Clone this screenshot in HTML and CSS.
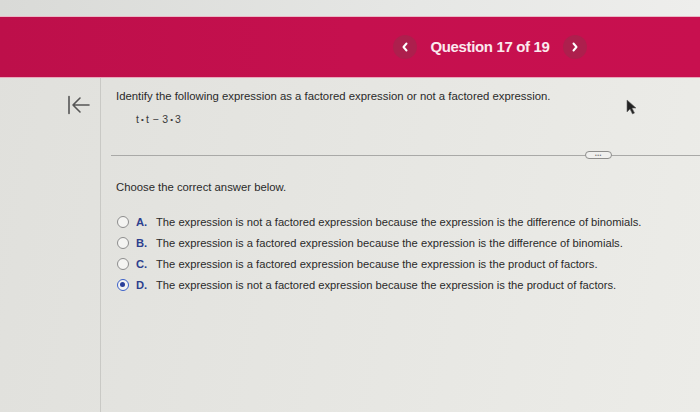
FILE: index.html
```html
<!DOCTYPE html>
<html>
<head>
<meta charset="utf-8">
<link rel="stylesheet" href="styles.css">
</head>
<body>
<div class="topstrip"></div>
<header class="banner">
  <nav class="qnav">
    <span class="navbtn"><svg width="8" height="10" viewBox="0 0 8 10"><path d="M5.5 1.5 L2.5 5 L5.5 8.5" fill="none" stroke="#fff" stroke-width="2" stroke-linecap="round" stroke-linejoin="round"/></svg></span>
    <span class="qtitle">Question 17 of 19</span>
    <span class="navbtn"><svg width="8" height="10" viewBox="0 0 8 10"><path d="M2.5 1.5 L5.5 5 L2.5 8.5" fill="none" stroke="#fff" stroke-width="2" stroke-linecap="round" stroke-linejoin="round"/></svg></span>
  </nav>
</header>
<main class="main">
  <aside class="sidebar">
    <svg class="collapse" width="24" height="20" viewBox="0 0 24 20"><path d="M2 1.5 V18.5 M22 10 H6 M13 3 L6 10 L13 17" fill="none" stroke="#555" stroke-width="1.6" stroke-linecap="round" stroke-linejoin="round"/></svg>
  </aside>
  <section class="content">
    <p class="prompt">Identify the following expression as a factored expression or not a factored expression.</p>
    <p class="expr">t<span class="dot">•</span>t<span class="minus">−</span>3<span class="dot">•</span>3</p>
    <div class="divider"><span class="pill">•••</span></div>
    <p class="choose">Choose the correct answer below.</p>
    <ul class="options">
      <li class="opt"><span class="radio"></span><span class="letter">A.</span><span class="otext">The expression is not a factored expression because the expression is the difference of binomials.</span></li>
      <li class="opt"><span class="radio"></span><span class="letter">B.</span><span class="otext">The expression is a factored expression because the expression is the difference of binomials.</span></li>
      <li class="opt"><span class="radio"></span><span class="letter">C.</span><span class="otext">The expression is a factored expression because the expression is the product of factors.</span></li>
      <li class="opt"><span class="radio checked"></span><span class="letter">D.</span><span class="otext">The expression is not a factored expression because the expression is the product of factors.</span></li>
    </ul>
  </section>
</main>
<svg class="cursor" width="12" height="16" viewBox="0 0 12 16"><path d="M1 1 L1 13 L4 10 L6.5 15 L8.5 14 L6 9 L10 9 Z" fill="#222" stroke="#666" stroke-width="0.6"/></svg>
</body>
</html>
```
FILE: styles.css
```css
html, body {
  margin: 0;
  padding: 0;
}
body {
  width: 700px;
  height: 412px;
  overflow: hidden;
  background: linear-gradient(100deg, #e0e0dc 0%, #e6e6e2 50%, #ecece8 100%);
  font-family: "Liberation Sans", Arial, sans-serif;
  color: #2a2a2a;
  position: relative;
}
.topstrip {
  height: 16px;
  background: linear-gradient(90deg, #d9dad7, #e6e7e5 60%, #eeeeec);
  border-bottom: 1px solid #e9b8c6;
}
.banner {
  height: 60px;
  background: linear-gradient(90deg, #bd0f4a 0%, #c5104e 50%, #c8104f 100%);
  display: flex;
  align-items: center;
  justify-content: center;
  padding-left: 280px;
  border-bottom: 1px solid #e8a9bb;
}
.qnav {
  display: flex;
  align-items: center;
  gap: 12px;
  margin-top: -1px;
}
.navbtn {
  width: 24px;
  height: 24px;
  border-radius: 50%;
  background: #ad1f4d;
  display: flex;
  align-items: center;
  justify-content: center;
}
.qtitle {
  color: #fbe9ee;
  font-weight: bold;
  font-size: 15px;
  letter-spacing: -0.35px;
  margin: 0 1px;
}
.main {
  display: flex;
  height: 335px;
}
.sidebar {
  width: 101px;
  border-right: 1px solid #c9c9c5;
  box-sizing: border-box;
  padding: 17px 0 0 67px;
}
.collapse {
  display: block;
}
.content {
  flex: 1;
  padding: 11px 0 0 15px;
}
.prompt {
  margin: 0;
  font-size: 11.35px;
  line-height: 14px;
}
.expr {
  margin: 9px 0 0 20px;
  font-size: 10.5px;
  line-height: 14px;
  letter-spacing: 0.6px;
  color: #3a3a3a;
}
.dot {
  font-size: 8px;
  vertical-align: 1px;
  margin: 0 1.5px;
}
.minus {
  margin: 0 3px;
}
.divider {
  margin: 28px 0 0 -5px;
  height: 1px;
  background: #a9a9a7;
  position: relative;
}
.pill {
  position: absolute;
  left: 474px;
  top: -4px;
  width: 27px;
  height: 8px;
  box-sizing: border-box;
  border: 1px solid #8e8e8c;
  border-radius: 5px;
  background: #f0f0ee;
  font-size: 5px;
  line-height: 6px;
  text-align: center;
  color: #777;
  letter-spacing: 0.5px;
}
.choose {
  margin: 24px 0 0 0;
  font-size: 11.3px;
  line-height: 14px;
}
.options {
  list-style: none;
  margin: 21px 0 0 0;
  padding: 0;
  display: flex;
  flex-direction: column;
  gap: 7px;
}
.opt {
  display: flex;
  align-items: center;
  font-size: 11.2px;
  line-height: 14px;
}
.radio {
  width: 12px;
  height: 12px;
  box-sizing: border-box;
  border: 1.5px solid #8d8d8d;
  border-radius: 50%;
  background: #f4f4f2;
  margin-left: 1px;
  position: relative;
}
.radio.checked {
  border-color: #3a5fc8;
}
.radio.checked::after {
  content: "";
  position: absolute;
  left: 2px;
  top: 2px;
  width: 5px;
  height: 5px;
  border-radius: 50%;
  background: #2a3f9a;
}
.letter {
  color: #2c3f8e;
  font-weight: bold;
  width: 20px;
  margin-left: 7px;
}
.otext {
  color: #2a2a2a;
}
.cursor {
  position: absolute;
  left: 626px;
  top: 99px;
}
```
